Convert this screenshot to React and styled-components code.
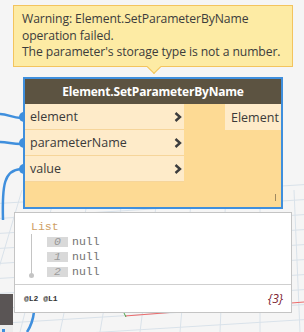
import React from 'react'
import styled, { createGlobalStyle } from 'styled-components'

const Global = createGlobalStyle`
  html, body { margin: 0; padding: 0; }
  body { background: #f5f5f5; font-family: "Open Sans", "Noto Sans", sans-serif; }
`

const Canvas = styled.div`
  position: relative;
  width: 304px;
  height: 332px;
  overflow: hidden;
  background: #f5f5f5;
  display: flex;
  flex-direction: column;
`

const Backdrop = styled.svg`
  position: absolute;
  left: 0;
  top: 0;
`

const Tooltip = styled.div`
  position: relative;
  margin: 5px 0 0 13px;
  width: 280px;
  height: 62px;
  box-sizing: border-box;
  padding: 5px 2px 0 8px;
  background: #fdeba4;
  border: 1px solid #f3c45e;
  color: #3c3c3c;
  font-size: 12.2px;
  line-height: 16.7px;
  letter-spacing: -0.1px;
  white-space: nowrap;

  p { margin: 0; }

  &::after {
    content: '';
    position: absolute;
    left: 135px;
    bottom: -6px;
    width: 9px;
    height: 9px;
    background: #fdeba4;
    border-right: 1px solid #f3c45e;
    border-bottom: 1px solid #f3c45e;
    transform: rotate(45deg);
  }
`

const Node = styled.div`
  position: relative;
  margin: 10px 0 0 23px;
  width: 260px;
  box-sizing: border-box;
  border: 2px solid #3f8fdd;
  background: #fdda94;
`

const Header = styled.div`
  height: 25px;
  background: #5c5341;
  color: #fff;
  font-weight: 700;
  font-size: 12px;
  letter-spacing: -0.2px;
  display: flex;
  align-items: center;
  justify-content: center;
`

const Body = styled.div`
  display: flex;
  height: 103px;
`

const Inputs = styled.div`
  width: 159px;
  display: flex;
  flex-direction: column;
`

const Port = styled.div`
  position: relative;
  height: 25px;
  border-bottom: 1px solid #f6d59a;
  background: #feebc9;
  display: flex;
  align-items: center;
  justify-content: space-between;
  padding: 0 2px 0 5px;
  font-size: 12.5px;
  color: #3a3a3a;

  &::before {
    content: '';
    position: absolute;
    left: -6px;
    top: 8px;
    width: 6px;
    height: 10px;
    border-radius: 6px 0 0 6px;
    background: #3f8fdd;
  }
`

const Chevron = styled.svg`
  flex: none;
`

const Outputs = styled.div`
  flex: 1;
  display: flex;
  flex-direction: column;
  align-items: flex-end;
  position: relative;
`

const OutPort = styled.div`
  height: 26px;
  width: 56px;
  box-sizing: border-box;
  background: #feebc9;
  display: flex;
  align-items: center;
  padding-left: 6px;
  font-size: 12.5px;
  color: #3a3a3a;
`

const Grip = styled.div`
  position: absolute;
  right: 5px;
  bottom: 6px;
  width: 1px;
  height: 7px;
  background: #a08a60;
`

const Preview = styled.div`
  position: relative;
  margin: 3px 0 0 14px;
  width: 278px;
  height: 101px;
  box-sizing: border-box;
  border: 1px solid #c4c4c4;
  background: #fff;
  display: flex;
  flex-direction: column;
  font-family: "Liberation Mono", "DejaVu Sans Mono", monospace;
`

const Tree = styled.div`
  height: 72px;
  border-bottom: 1px solid #cfcfcf;
  padding: 7px 0 0 16px;
  box-sizing: border-box;
  position: relative;
`

const ListLabel = styled.div`
  font-size: 11.5px;
  color: #cfa066;
  line-height: 14px;
`

const Stem = styled.div`
  position: absolute;
  left: 16px;
  top: 21px;
  width: 1px;
  height: 41px;
  background: #c4c4c4;

  &::after {
    content: '';
    position: absolute;
    left: -2px;
    bottom: -3px;
    width: 5px;
    height: 5px;
    border-radius: 50%;
    background: #c4c4c4;
  }
`

const Item = styled.div`
  display: flex;
  align-items: center;
  height: 15px;
  margin-left: 16px;
  font-size: 11.5px;
  color: #737373;
`

const Index = styled.span`
  width: 21px;
  height: 10px;
  line-height: 10px;
  margin-right: 4px;
  background: #d9d9d9;
  color: #9a9a9a;
  font-style: italic;
  text-align: center;
`

const Footer = styled.div`
  flex: 1;
  display: flex;
  align-items: center;
  justify-content: space-between;
  padding: 0 8px 0 9px;
  font-size: 8px;
  font-weight: 700;
  color: #333;
`

const Count = styled.span`
  font-family: "Open Sans", sans-serif;
  font-size: 12px;
  font-weight: 400;
  font-style: italic;
  color: #7a2030;
`

const OtherNode = styled.div`
  position: absolute;
  left: 0;
  top: 294px;
  width: 13px;
  height: 31px;
  background: #5a5555;
`

const inputs = ['element', 'parameterName', 'value']

const Arrow = () => (
  <Chevron width="8" height="10" viewBox="0 0 8 10">
    <path d="M1.5 1 L6 5 L1.5 9" fill="none" stroke="#3d3d3d" strokeWidth="2.4" />
  </Chevron>
)

const Grid = () => {
  const lines = []
  for (let i = 0; i < 14; i++) {
    const x = -80 + i * 34
    lines.push(<line key={'a' + i} x1={x} y1="190" x2={x - 60 + i * 6} y2="332" stroke="#d9e2ea" strokeWidth="1" />)
  }
  for (let j = 0; j < 10; j++) {
    const y = 192 + j * 15
    lines.push(<line key={'b' + j} x1="-10" y1={y + 12} x2="314" y2={y - 8} stroke="#d9e2ea" strokeWidth="1" />)
  }
  return lines
}

const App = () => {
  return (
    <Canvas>
      <Global />
      <Backdrop width="304" height="332" viewBox="0 0 304 332">
        <Grid />
        <line x1="125" y1="316" x2="304" y2="302" stroke="#ec6b6b" strokeWidth="1" />
        <line x1="124" y1="313" x2="126" y2="317" stroke="#4aa84a" strokeWidth="1" />
        <path d="M0 114 C8 114 12 118 21 118" fill="none" stroke="#3f8fdd" strokeWidth="2.5" />
        <path d="M0 142 C8 142 12 144 21 144" fill="none" stroke="#3f8fdd" strokeWidth="2.5" />
        <path d="M21 169 C4 170 2 185 3 220" fill="none" stroke="#3f8fdd" strokeWidth="2.5" />
        <path d="M34 312 C33 320 31 326 27 332" fill="none" stroke="#3f8fdd" strokeWidth="2.5" />
        <rect x="0" y="325" width="13" height="7" fill="#ececec" />
        <rect x="2" y="329" width="3" height="3" fill="#3f8fdd" />
      </Backdrop>
      <OtherNode />
      <Tooltip>
        <p>Warning: Element.SetParameterByName<br />operation failed.</p>
        <p>The parameter's storage type is not a number.</p>
      </Tooltip>
      <Node>
        <Header>Element.SetParameterByName</Header>
        <Body>
          <Inputs>
            {inputs.map((name) => (
              <Port key={name}>
                {name}
                <Arrow />
              </Port>
            ))}
          </Inputs>
          <Outputs>
            <OutPort>Element</OutPort>
            <Grip />
          </Outputs>
        </Body>
      </Node>
      <Preview>
        <Tree>
          <ListLabel>List</ListLabel>
          <Stem />
          {[0, 1, 2].map((i) => (
            <Item key={i}>
              <Index>{i}</Index>
              null
            </Item>
          ))}
        </Tree>
        <Footer>
          <span>@L2 @L1</span>
          <Count>{'{3}'}</Count>
        </Footer>
      </Preview>
    </Canvas>
  )
}

export default App
